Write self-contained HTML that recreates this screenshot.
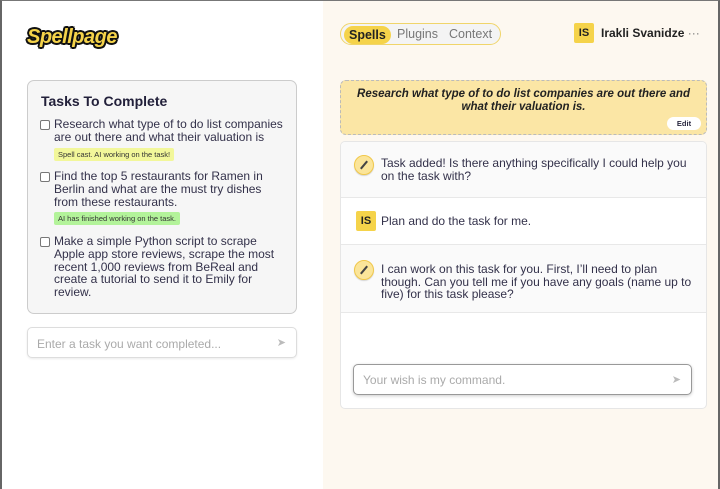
<!DOCTYPE html>
<html><head><style>
*{box-sizing:border-box;margin:0;padding:0}
body{width:720px;height:489px;font-family:"Liberation Sans",sans-serif;color:#2a2840;overflow:hidden;position:relative;background:#fff}
.frame{position:absolute;inset:0;border:2px solid #666;border-bottom:none;border-top:1px solid #777}
.left{position:absolute;left:0;top:0;width:323px;height:489px;background:#fff}
.right{position:absolute;left:323px;top:0;width:397px;height:489px;background:#fdf8f0}
.abs{position:absolute}
.logo{left:27px;top:26px;font-size:20px;font-weight:900;font-style:italic;color:#f5d34a;letter-spacing:-0.5px;
 text-shadow:-1.5px -1.5px 0 #111,1.5px -1.5px 0 #111,-1.5px 1.5px 0 #111,1.5px 1.5px 0 #111,0 2px 0 #111,0 -2px 0 #111,2px 0 0 #111,-2px 0 0 #111}
.card{left:27px;top:80px;width:270px;height:234px;background:#f6f6f6;border:1px solid #ccc;border-radius:7px}
.t{left:41px;top:93px;font-size:14px;font-weight:bold;color:#22203a}
.task{position:absolute;left:54px;font-size:12px;line-height:12.8px;color:#33314a;width:232px}
.cb{position:absolute;left:40px;width:10px;height:10px;border:1px solid #777;border-radius:2px;background:#fff}
.badge{position:absolute;left:54px;height:13px;font-size:7.5px;line-height:13px;padding:0 4px;border-radius:2px;color:#333}
.inp{left:27px;top:327px;width:270px;height:31px;background:#fff;border:1px solid #ddd;border-radius:5px;box-shadow:0 1px 2px rgba(0,0,0,.08);font-size:12px;color:#aaa;padding:9px 9px}
.tabs{left:340px;top:23px;width:161px;height:22px;border:1px solid #f0d56a;border-radius:12px;background:#f4f4f4;font-size:12.5px;color:#777}
.tabs span{position:absolute;top:3px}
.sp{left:3px;top:2px!important;background:#f5d34a;color:#222;font-weight:bold;border-radius:10px;padding:2px 5px}
.av{width:20px;height:20px;background:#f5d34a;font-size:11px;font-weight:bold;text-align:center;line-height:20px;border-radius:2px;color:#222}
.yb{left:340px;top:80px;width:367px;height:55px;background:#fbe6a5;border:1.5px dashed #bbb;border-radius:6px;text-align:center;font-size:11.5px;font-weight:bold;font-style:italic;line-height:13px;padding:7px 16px 0;color:#222}
.edit{left:667px;top:117px;width:34px;height:13px;background:#fff;border-radius:7px;font-size:7.5px;font-weight:bold;text-align:center;line-height:13px}
.chat{left:340px;top:141px;width:367px;height:268px;background:#fff;border:1px solid #e6e6e6;border-radius:5px;overflow:hidden}
.msg{position:absolute;left:0;width:100%;border-bottom:1px solid #e8e8e8}
.mt{position:absolute;left:40px;font-size:12px;line-height:12.6px;color:#33314a}
.wand{position:absolute;left:13px;width:20px;height:20px;border-radius:50%;background:#fbe59a;border:1.5px solid #f1c84a;box-shadow:0 1px 1px rgba(0,0,0,.15)}
.wand:after{content:"";position:absolute;left:4px;top:8px;width:10px;height:2px;background:#444;transform:rotate(-50deg)}
.ci{left:353px;top:364px;width:339px;height:31px;border:1.5px solid #999;border-radius:5px;background:#fff;box-shadow:0 1px 3px rgba(0,0,0,.2);font-size:12px;color:#aaa;padding:8px 9px}
</style></head><body>
<div class="left"></div><div class="right"></div>
<div class="abs logo">Spellpage</div>
<div class="abs card"></div>
<div class="abs t">Tasks To Complete</div>
<div class="cb" style="top:120px"></div>
<div class="task" style="top:118px">Research what type of to do list companies are out there and what their valuation is</div>
<div class="badge" style="top:148px;background:#f2f79a">Spell cast. AI working on the task!</div>
<div class="cb" style="top:172px"></div>
<div class="task" style="top:170px">Find the top 5 restaurants for Ramen in Berlin and what are the must try dishes from these restaurants.</div>
<div class="badge" style="top:212px;background:#b3f39a">AI has finished working on the task.</div>
<div class="cb" style="top:237px"></div>
<div class="task" style="top:235px">Make a simple Python script to scrape Apple app store reviews, scrape the most recent 1,000 reviews from BeReal and create a tutorial to send it to Emily for review.</div>
<div class="abs inp">Enter a task you want completed...<span style="position:absolute;right:10px;top:8px;font-size:11px;color:#bbb">➤</span></div>

<div class="abs tabs"><span class="sp">Spells</span><span style="left:56px">Plugins</span><span style="left:108px">Context</span></div>
<div class="abs av" style="left:574px;top:23px">IS</div>
<div class="abs" style="left:601px;top:26px;font-size:12px;font-weight:bold;color:#222">Irakli Svanidze <span style="color:#777;font-weight:normal">···</span></div>
<div class="abs yb">Research what type of to do list companies are out there and what their valuation is.</div>
<div class="abs edit">Edit</div>
<div class="abs chat">
 <div class="msg" style="top:0;height:56px;background:#fafafa"><div class="wand" style="top:13px"></div><div class="mt" style="top:15px">Task added! Is there anything specifically I could help you<br>on the task with?</div></div>
 <div class="msg" style="top:56px;height:47px"><div class="abs av" style="left:15px;top:13px">IS</div><div class="mt" style="top:17px">Plan and do the task for me.</div></div>
 <div class="msg" style="top:103px;height:68px;background:#fafafa"><div class="wand" style="top:15px"></div><div class="mt" style="top:18px">I can work on this task for you. First, I’ll need to plan<br>though. Can you tell me if you have any goals (name up to<br>five) for this task please?</div></div>
</div>
<div class="abs ci">Your wish is my command.<span style="position:absolute;right:10px;top:8px;font-size:11px;color:#bbb">➤</span></div>
<div class="frame"></div>
</body></html>
